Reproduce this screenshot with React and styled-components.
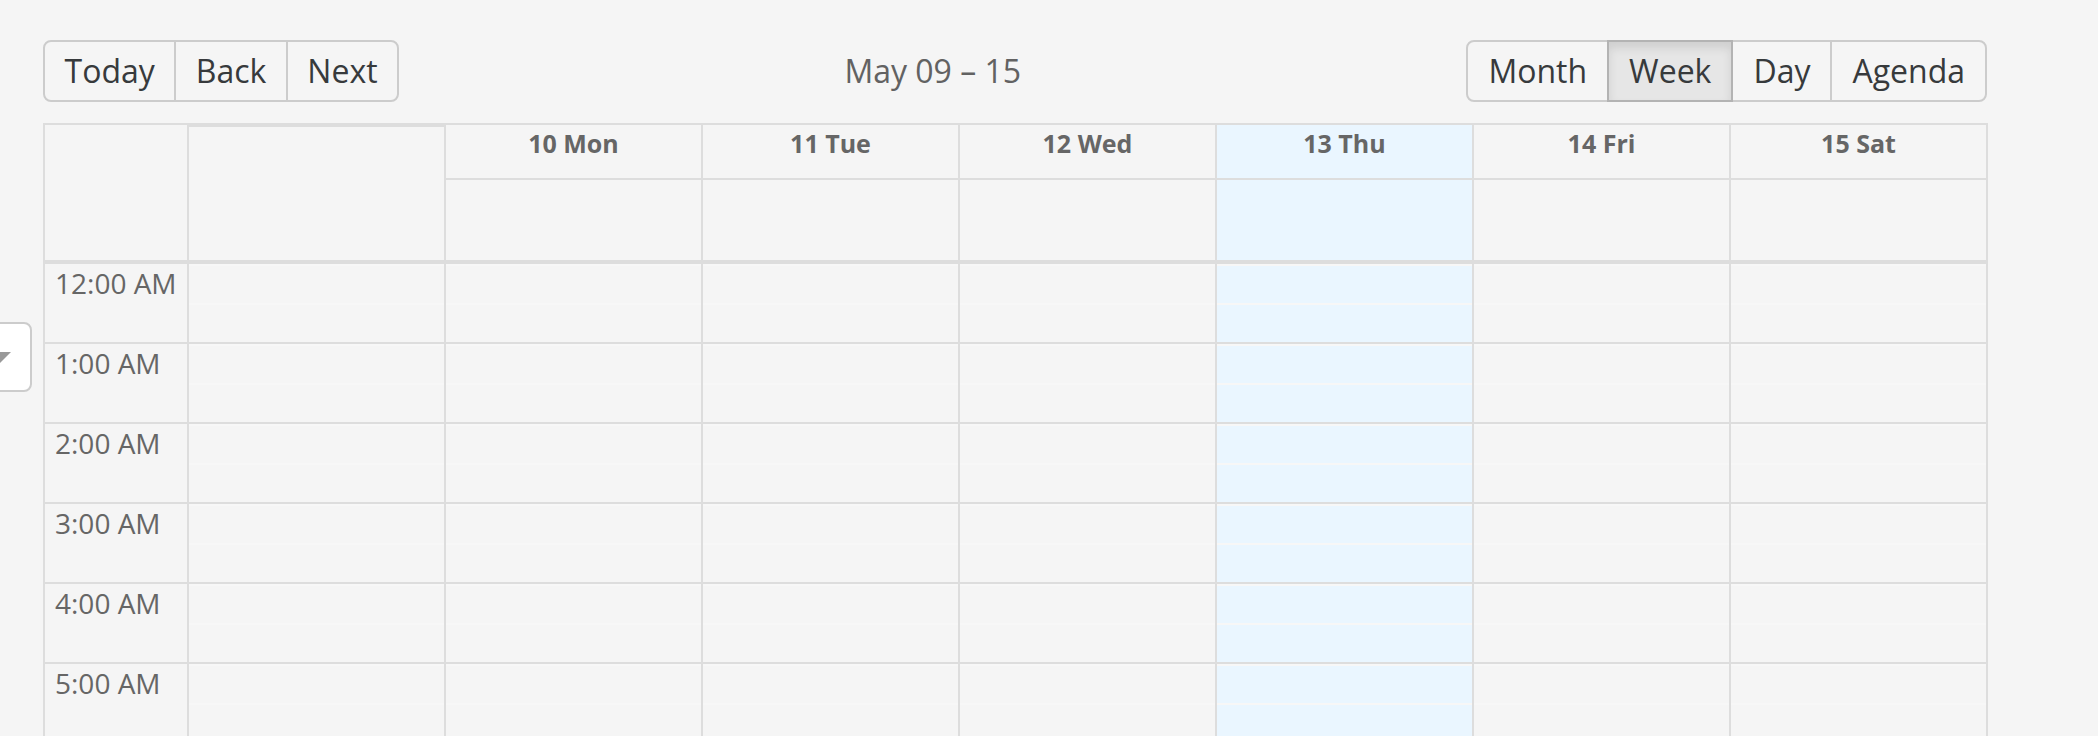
import React from 'react';
import styled, { createGlobalStyle, css } from 'styled-components';

const GlobalStyle = createGlobalStyle`
  html, body {
    margin: 0;
    padding: 0;
    background: #f5f5f5;
    overflow: hidden;
  }
  body {
    font-family: "Open Sans", "Liberation Sans", sans-serif;
    width: 2098px;
    height: 736px;
  }
`;

const Page = styled.div`
  position: relative;
  height: 736px;
  overflow: hidden;
  box-sizing: border-box;
  padding: 40px 0 0 43px;
`;

const Frame = styled.div`
  width: 1945px;
  display: flex;
  flex-direction: column;
`;

const Toolbar = styled.div`
  display: flex;
  align-items: center;
  height: 62px;
  margin-bottom: 21px;
`;

const BtnGroup = styled.div`
  display: inline-flex;
  flex: none;
  margin-right: ${(p) => p.$inset || 0}px;
`;

const Btn = styled.button`
  font-family: inherit;
  font-size: 32px;
  color: #373a3c;
  height: 62px;
  padding: 0 ${(p) => p.$pad || 19.5}px;
  margin: 0;
  border: 2px solid #ccc;
  background: transparent;
  line-height: 1;
  box-sizing: border-box;
  white-space: nowrap;
  position: relative;
  & + & {
    margin-left: -2px;
  }
  &:first-child {
    border-radius: 8px 0 0 8px;
  }
  &:last-child {
    border-radius: 0 8px 8px 0;
  }
  ${(p) =>
    p.$active &&
    css`
      background: #e6e6e6;
      border-color: #b3b3b3;
      box-shadow: inset 0 6px 10px rgba(0, 0, 0, 0.1);
      z-index: 1;
    `}
`;

const Title = styled.span`
  flex: 1;
  text-align: center;
  font-size: 32px;
  line-height: 1;
  color: #626262;
`;

const Calendar = styled.div`
  border: 2px solid #ddd;
  border-bottom: none;
  display: flex;
  flex-direction: column;
`;

const HeaderRow = styled.div`
  display: flex;
  height: 135px;
  border-bottom: 4px solid #ddd;
`;

const GutterHead = styled.div`
  width: 142px;
  flex: none;
`;

const HeadCol = styled.div`
  flex: 1;
  min-width: 0;
  display: flex;
  flex-direction: column;
  border-left: 2px solid #ddd;
  box-sizing: border-box;
  background: ${(p) => (p.$today ? '#eaf6ff' : 'transparent')};
  ${(p) =>
    p.$blank &&
    css`
      border-top: 2px solid #ddd;
    `}
`;

const DayLabel = styled.div`
  box-sizing: content-box;
  height: 52px;
  padding-top: 1px;
  border-bottom: 2px solid #ddd;
  text-align: center;
  font-size: 25px;
  font-weight: 700;
  color: #666;
  line-height: 34px;
`;

const AllDay = styled.div`
  flex: 1;
`;

const HourRow = styled.div`
  display: flex;
  height: 80px;
  box-sizing: border-box;
  border-bottom: 2px solid #ddd;
  flex: none;
`;

const GutterCell = styled.div`
  width: 142px;
  flex: none;
  box-sizing: border-box;
  padding: 0 10px;
  font-size: 28px;
  color: #666;
  white-space: nowrap;
`;

const DayCell = styled.div`
  flex: 1;
  min-width: 0;
  display: flex;
  flex-direction: column;
  border-left: 2px solid #ddd;
  background: ${(p) => (p.$today ? '#eaf6ff' : 'transparent')};
`;

const Slot = styled.div`
  flex: 1;
  border-top: 2px solid #f7f7f7;
`;

const SideTab = styled.div`
  position: absolute;
  left: -40px;
  top: 322px;
  width: 72px;
  height: 70px;
  box-sizing: border-box;
  background: #fff;
  border: 2px solid #ccc;
  border-radius: 8px;
`;

const Caret = styled.svg`
  position: absolute;
  left: 27px;
  top: 28px;
  display: block;
`;

const days = [
  { label: '', blank: true },
  { label: '10 Mon' },
  { label: '11 Tue' },
  { label: '12 Wed' },
  { label: '13 Thu', today: true },
  { label: '14 Fri' },
  { label: '15 Sat' },
];

const hours = ['12:00 AM', '1:00 AM', '2:00 AM', '3:00 AM', '4:00 AM', '5:00 AM'];

const views = ['Month', 'Week', 'Day', 'Agenda'];

export default function App() {
  return (
    <>
      <GlobalStyle />
      <Page>
        <Frame>
          <Toolbar>
            <BtnGroup>
              <Btn>Today</Btn>
              <Btn>Back</Btn>
              <Btn>Next</Btn>
            </BtnGroup>
            <Title>May 09 – 15</Title>
            <BtnGroup $inset={1}>
              {views.map((v) => (
                <Btn key={v} $pad={20} $active={v === 'Week'}>
                  {v}
                </Btn>
              ))}
            </BtnGroup>
          </Toolbar>
          <Calendar>
            <HeaderRow>
              <GutterHead />
              {days.map((d, i) => (
                <HeadCol key={i} $today={d.today} $blank={d.blank}>
                  {!d.blank && <DayLabel>{d.label}</DayLabel>}
                  <AllDay />
                </HeadCol>
              ))}
            </HeaderRow>
            {hours.map((h) => (
              <HourRow key={h}>
                <GutterCell>{h}</GutterCell>
                {days.map((d, i) => (
                  <DayCell key={i} $today={d.today}>
                    <Slot />
                    <Slot />
                  </DayCell>
                ))}
              </HourRow>
            ))}
          </Calendar>
        </Frame>
        <SideTab>
          <Caret width="22" height="11" viewBox="0 0 22 11">
            <polygon points="0,0 22,0 11,11" fill="#999" />
          </Caret>
        </SideTab>
      </Page>
    </>
  );
}
